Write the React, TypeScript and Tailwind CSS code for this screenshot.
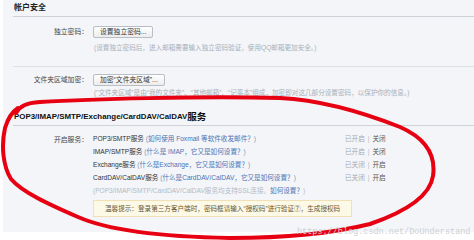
import React from 'react';

const Btn = ({ children }: { children: React.ReactNode }) => (
  <button className="h-[12px] px-[6px] rounded-[2px] border border-[#b9bec6] bg-gradient-to-b from-white to-[#ececec] text-[6.8px] leading-[10px] text-[#333] whitespace-nowrap">
    {children}
  </button>
);

const services = [
  { name: 'POP3/SMTP服务', help: '如何使用 Foxmail 等软件收发邮件？', on: true },
  { name: 'IMAP/SMTP服务', help: '什么是 IMAP，它又是如何设置？', on: true },
  { name: 'Exchange服务', help: '什么是Exchange，它又是如何设置？', on: false },
  { name: 'CardDAV/CalDAV服务', help: '什么是CardDAV/CalDAV，它又是如何设置？', on: false },
];

export default function App() {
  return (
    <div className="relative w-[474px] h-[240px] bg-white overflow-hidden font-['Liberation_Sans','Noto_Sans_CJK_SC',sans-serif]">
      <div className="ml-[3px] h-[232px] bg-[#f3f5f8] pl-[10px]">
        {/* 帐户安全 */}
        <div className="h-[17px] border-b border-[#cfd3d9] flex items-center pl-[1px] text-[8px] font-bold text-[#222]">
          帐户安全
        </div>

        <div className="h-[50px] border-b border-[#dcdfe4] pt-[9px]">
          <div className="flex items-center">
            <div className="w-[80px] pr-[5px] text-right text-[6.8px] text-[#444]">独立密码：</div>
            <Btn>设置独立密码...</Btn>
          </div>
          <div className="mt-[5px] ml-[81px] h-[10px] leading-[10px] text-[6.6px] text-[#aab0b8] whitespace-nowrap">
            (设置独立密码后，进入邮箱需要输入独立密码验证，使用QQ邮箱更加安全。)
          </div>
        </div>

        <div className="pt-[7px]">
          <div className="flex items-center">
            <div className="w-[80px] pr-[5px] text-right text-[6.8px] text-[#444]">文件夹区域加密：</div>
            <Btn>加密“文件夹区域”...</Btn>
          </div>
          <div className="mt-[2px] ml-[81px] h-[10px] leading-[10px] text-[6.6px] text-[#aab0b8] whitespace-nowrap">
            (“文件夹区域”是由“我的文件夹”、“其他邮箱”、“记事本”组成，加密即对这几部分设置密码，以保护你的信息。)
          </div>
        </div>

        {/* POP3 section */}
        <div className="mt-[11px] h-[17px] border-b border-[#cfd3d9] flex items-center pl-[1px] font-bold text-[#111] whitespace-nowrap">
          <span className="text-[7.9px]">POP3/IMAP/SMTP/Exchange/CardDAV/CalDAV</span>
          <span className="text-[9.5px]">服务</span>
        </div>

        <div className="grid grid-cols-[80px_252px_80px] auto-rows-[13px] pt-[6px] text-[6.6px] leading-[13px] whitespace-nowrap">
          {services.map((s, i) => (
            <React.Fragment key={s.name}>
              <div className="pr-[5px] pt-[1px] text-right text-[6.8px] text-[#444]">{i === 0 ? '开启服务：' : ''}</div>
              <div className="text-[#333]">
                {s.name}
                <span className="text-[#7f95b5]"> (</span>
                <span className="text-[#4a74b4]">{s.help}</span>
                <span className="text-[#7f95b5]">)</span>
              </div>
              <div>
                <span className="text-[#a4a9b0]">{s.on ? '已开启' : '已关闭'}</span>
                <span className="text-[#b5bac0] mx-[3px]">|</span>
                <span className="text-[#555]">{s.on ? '关闭' : '开启'}</span>
              </div>
            </React.Fragment>
          ))}
          <div className="col-start-2 col-span-2 text-[#b3bbc6]">
            (POP3/IMAP/SMTP/CardDAV/CalDAV服务均支持SSL连接。<span className="text-[#4a74b4]">如何设置？</span>)
          </div>
          <div className="col-start-2 col-span-2 mt-[3px] w-[259px] h-[17px] border border-[#efe0b5] bg-[#fdf9e7] pl-[11px] flex items-center text-[#65552f]">
            温馨提示：登录第三方客户端时，密码框请输入“授权码”进行验证⑦，生成授权码
          </div>
        </div>
      </div>

      {/* hand-drawn red loop */}
      <svg className="absolute inset-0 pointer-events-none" width="474" height="240" viewBox="0 0 474 240">
        <path
          d="M 16 113 C 20 106, 26 103, 40 102 C 90 99, 200 96, 280 98 C 320 100, 362 112, 400 127 C 425 138, 436 155, 433 176 C 430 196, 405 212, 370 224 C 330 234, 280 238, 230 238 C 170 237, 110 231, 78 217 C 48 204, 22 192, 11 179 C 3 166, 1 146, 5 128 C 8 118, 12 112, 18 108"
          fill="none"
          stroke="#e60012"
          strokeWidth="4"
          strokeLinecap="round"
        />
      </svg>

      <div className="absolute left-[297px] top-[226px] font-['Liberation_Mono',monospace] text-[8.5px] text-[#cdd0d5]">
        https://blog.csdn.net/DoUnderstand
      </div>
    </div>
  );
}
